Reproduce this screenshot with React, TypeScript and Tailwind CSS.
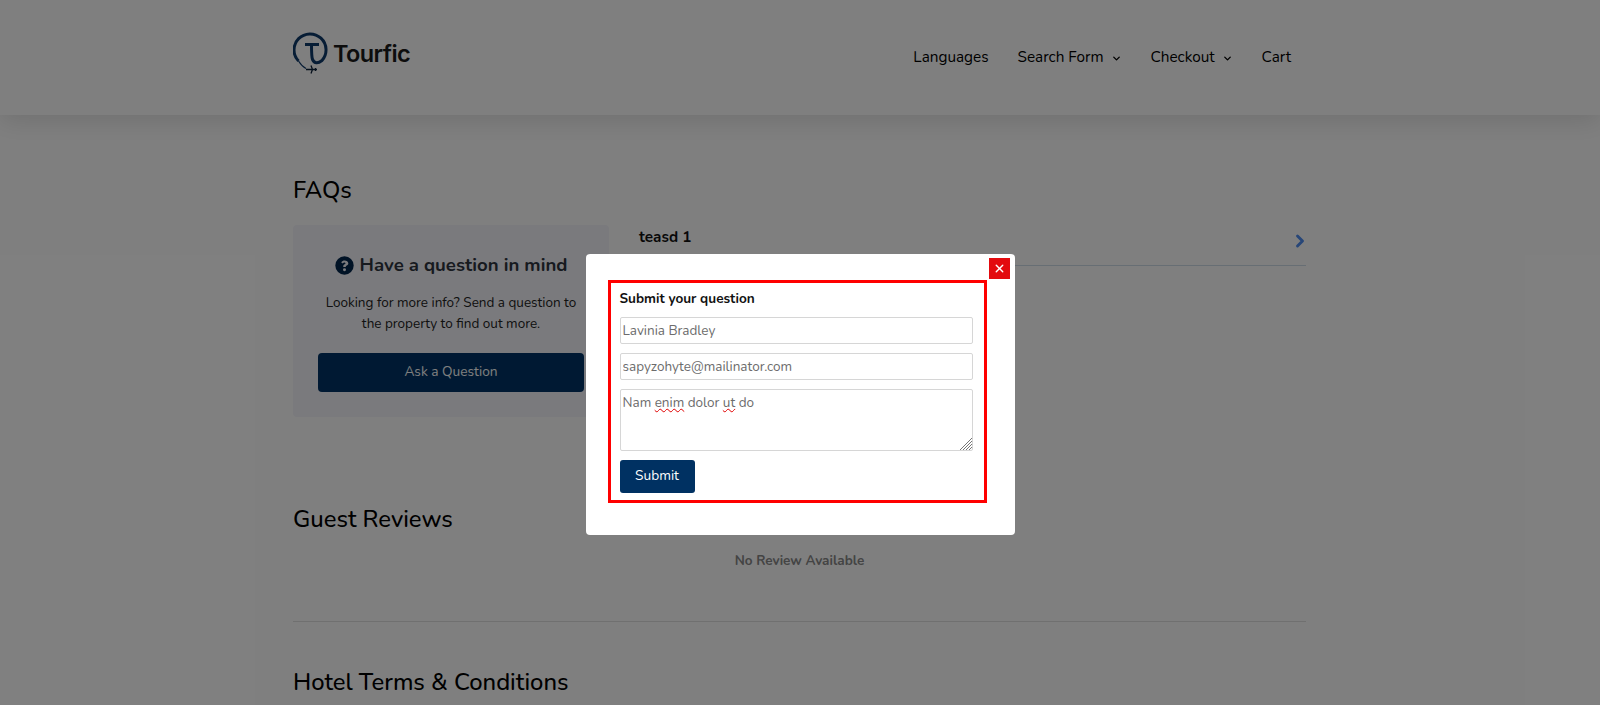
import React from 'react';
import { ChevronDown, ChevronRight, X } from 'lucide-react';

const FONT = "font-['Nunito','Noto_Sans','Open_Sans',sans-serif]";

const Logo = () => (
  <div className="flex items-center h-[48px]">
    <svg width="40" height="44" viewBox="0 0 40 44" fill="none" className="shrink-0">
      <path d="M5.500 31A16 16 0 1 1 29 30.500Q22.500 35.500 19.500 29.500Q18.500 27 18.500 14" stroke="#0f3a6b" strokeWidth="3" />
      <path d="M12 14.500h14" stroke="#0f3a6b" strokeWidth="3" />
      <path d="M5.500 31Q9 36.500 13 38.500" stroke="#0f3a6b" strokeWidth="1.200" />
      <path d="M13 39.500h11M18 35.500l1.500 4-1.500 4M22.500 38v3" stroke="#0b2038" strokeWidth="1.300" />
    </svg>
    <span className="mt-[4px] text-[23.500px] font-semibold font-['Inter',sans-serif] text-[#1a1a1a] leading-none tracking-[-0.6px]">
      Tourfic
    </span>
  </div>
);

const NavLink = ({ label, caret }: { label: string; caret?: boolean }) => (
  <a className="flex items-center text-[15.300px] text-black">
    {label}
    {caret && <ChevronDown size={11} strokeWidth={3} className="ml-[7px] mt-[3px]" />}
  </a>
);

const Section = ({ title, className }: { title: string; className: string }) => (
  <h2 className={`text-[23.800px] leading-[32px] font-medium text-black ${className}`}>{title}</h2>
);

const INPUT = 'h-[27px] w-full rounded-[2px] border border-[#d6d6d6] px-[2px] text-[13.500px] text-[#6c6c6c] outline-none';

export default function App() {
  return (
    <div className={`relative h-[705px] overflow-hidden bg-white ${FONT}`}>
      <header className="h-[115px] bg-white shadow-[0_6px_24px_rgba(0,0,0,0.12)]">
        <div className="ml-[293px] w-[1013px] pt-[28px] flex items-start justify-between">
          <Logo />
          <nav className="flex items-center gap-[29px] pt-[18px] pr-[15px]">
            <NavLink label="Languages" />
            <NavLink label="Search Form" caret />
            <NavLink label="Checkout" caret />
            <NavLink label="Cart" />
          </nav>
        </div>
      </header>

      <main className="ml-[293px] w-[1013px]">
        <Section title="FAQs" className="mt-[59px]" />
        <div className="mt-[19px] flex gap-[30px]">
          <div className="w-[316px] h-[192px] shrink-0 rounded-[4px] bg-[#f5f5fa] px-[25px] pt-[26px] text-center">
            <h3 className="flex items-center justify-center text-[18.600px] leading-[28px] font-bold text-[#2f343f]">
              <svg width="19" height="19" viewBox="0 0 512 512" className="mr-[6px]" fill="#03264d">
                <path d="M256 8a248 248 0 1 0 0 496 248 248 0 0 0 0-496zm0 400a40 40 0 1 1 0-80 40 40 0 0 1 0 80zm50-147c-14 8-16 14-16 27v10h-68v-16c0-34 20-49 37-59 14-8 23-13 23-24 0-13-15-22-31-22-20 0-29 10-42 26l-41-31c23-33 52-49 94-49 45 0 97 35 97 81 0 32-21 44-53 57z" />
              </svg>
              Have a question in mind
            </h3>
            <p className="mt-[13px] text-[13.500px] leading-[21px] text-[#222]">
              Looking for more info? Send a question to the property to find out more.
            </p>
            <div className="mt-[19px] h-[39px] rounded-[4px] bg-[#003366] flex items-center justify-center text-[13.700px] text-white">
              Ask a Question
            </div>
          </div>
          <div className="flex-1">
            <div className="relative h-[41px] border-b border-[#cfdde8]">
              <span className="text-[15.300px] font-bold text-[#111] leading-[22px] block pt-[1px]">teasd 1</span>
              <ChevronRight size={20} strokeWidth={3.500} className="absolute right-[-4px] top-[6px] text-[#4f8df0]" />
            </div>
          </div>
        </div>

        <Section title="Guest Reviews" className="mt-[86px]" />
        <p className="mt-[16px] text-center text-[13.500px] font-bold leading-[20px] text-[#888]">No Review Available</p>
        <div className="mt-[50px] border-t border-[#e0e0e0]" />
        <Section title="Hotel Terms & Conditions" className="mt-[44px]" />
      </main>

      <div className="absolute inset-0 bg-black/50 flex justify-center pt-[254px]">
        <div className="relative w-[429px] h-[281px] rounded-[4px] bg-white pt-[26px] pl-[22px]">
          <button className="absolute right-[5px] top-[4px] h-[21px] w-[21px] bg-[#e30a0e] flex items-center justify-center text-white">
            <X size={13} strokeWidth={2.500} />
          </button>
          <div className="w-[379px] h-[223px] border-[3px] border-[#ff0000] pl-[9px] pr-[11px] pt-[6px]">
            <h4 className="text-[13.600px] leading-[20px] font-bold text-[#111]">Submit your question</h4>
            <div className="mt-[8px] flex flex-col gap-[9px]">
              <input readOnly defaultValue="Lavinia Bradley" className={INPUT} />
              <input readOnly defaultValue="sapyzohyte@mailinator.com" className={INPUT} />
              <div className="relative h-[62px] w-full rounded-[2px] border border-[#d6d6d6] px-[2px] pt-[3px] text-[13.500px] leading-[20px] text-[#6c6c6c]">
                Nam{' '}
                <span className="underline decoration-wavy decoration-[#e00000] decoration-1">enim</span> dolor{' '}
                <span className="underline decoration-wavy decoration-[#e00000] decoration-1">ut</span> do
                <svg width="13" height="13" viewBox="0 0 13 13" className="absolute right-0 bottom-0" stroke="#777" strokeWidth="1">
                  <path d="M1 13L13 1M4 13L13 4M7 13L13 7M10 13L13 10" />
                </svg>
              </div>
            </div>
            <button className="mt-[9px] block h-[33px] w-[75px] rounded-[3px] bg-[#003162] text-[13.700px] text-white">
              Submit
            </button>
          </div>
        </div>
      </div>
    </div>
  );
}
